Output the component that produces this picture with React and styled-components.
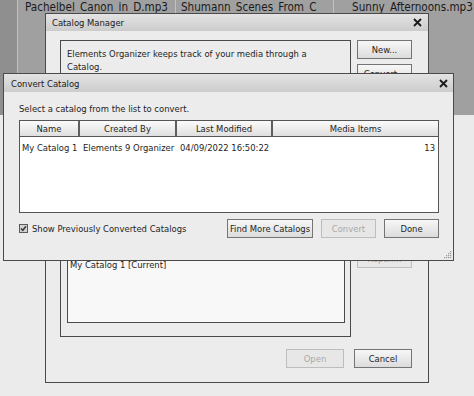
import styled, { createGlobalStyle } from "styled-components";

const UI_FONT = `"DejaVu Sans Condensed", "Liberation Sans", Arial, sans-serif`;

const GlobalStyle = createGlobalStyle`
  html, body {
    margin: 0;
    padding: 0;
  }
  body {
    background: #ebebeb;
    font-family: ${UI_FONT};
    color: #1e1e1e;
  }
`;

const Desktop = styled.div`
  position: relative;
  width: 474px;
  height: 396px;
  overflow: hidden;
  background: #ebebeb;
`;

const MediaRow = styled.div`
  display: flex;
  height: 115px;
  background: #a0a0a0;
`;

const Gutter = styled.div`
  flex: none;
  width: 17px;
  background: #8f8f8f;
`;

const Tile = styled.div`
  flex: none;
  width: 157px;
  border-left: 1px solid #c2c2c2;
`;

const Caption = styled.div`
  padding: 0 5px;
  font-size: 11.6px;
  line-height: 15px;
  white-space: nowrap;
  overflow: hidden;
  text-align: ${(p) => p.$align || "center"};
  color: #1a1a1a;
`;

const Window = styled.div`
  position: absolute;
  left: ${(p) => p.$x}px;
  top: ${(p) => p.$y}px;
  width: ${(p) => p.$w}px;
  height: ${(p) => p.$h}px;
  box-sizing: border-box;
  border: 1px solid #4a4a4a;
  background: #ececec;
  display: flex;
  flex-direction: column;
`;

const TitleBar = styled.div`
  flex: none;
  height: ${(p) => p.$h}px;
  display: flex;
  align-items: center;
  justify-content: space-between;
  padding: 0 ${(p) => p.$pr}px 0 ${(p) => p.$pl}px;
  background: linear-gradient(#e3e3e3, #cccccc);
  font-size: 9.4px;
  color: #1a1a1a;
`;

const Body = styled.div`
  flex: 1;
  display: flex;
  flex-direction: column;
  padding: ${(p) => p.$pad};
  font-size: 9.4px;
  line-height: 13px;
`;

const TopRow = styled.div`
  display: flex;
  gap: 6px;
`;

const GroupBox = styled.div`
  flex: 1;
  height: 297px;
  box-sizing: border-box;
  border: 1px solid #4a4a4a;
  padding: 6px 5px 13px 6px;
  display: flex;
  flex-direction: column;
`;

const ListBox = styled.div`
  margin-top: auto;
  height: 67px;
  box-sizing: border-box;
  border: 1px solid #4a4a4a;
  background: #f8f8f8;
  padding: 1px 2px;
`;

const ButtonColumn = styled.div`
  flex: none;
  width: 55px;
  height: 228px;
  display: flex;
  flex-direction: column;
  gap: 5px;
`;

const Button = styled.button`
  flex: none;
  width: ${(p) => p.$w || 55}px;
  height: 19px;
  box-sizing: border-box;
  margin: 0;
  margin-top: ${(p) => (p.$push ? "auto" : "0")};
  padding: 0;
  border: 1px solid ${(p) => (p.disabled ? "#bdbdbd" : "#747474")};
  border-radius: 0;
  background: ${(p) =>
    p.disabled ? "#e7e7e7" : "linear-gradient(#f7f7f7, #dcdcdc)"};
  color: ${(p) => (p.disabled ? "#a9a9a9" : "#1e1e1e")};
  font-family: ${UI_FONT};
  font-size: 9.4px;
  white-space: nowrap;
`;

const FooterRow = styled.div`
  display: flex;
  justify-content: flex-end;
  gap: 10px;
  margin-top: 12px;
`;

const Prompt = styled.div`
  margin-bottom: 5px;
`;

const Table = styled.div`
  height: 93px;
  box-sizing: border-box;
  border: 1px solid #555;
  background: #fff;
`;

const Grid = styled.div`
  display: grid;
  grid-template-columns: 60px 97px 96px 1fr;
`;

const HeadCell = styled.div`
  height: 16px;
  box-sizing: border-box;
  border-bottom: 1px solid #555;
  border-right: ${(p) => (p.$last ? "none" : "2px solid #5e5e5e")};
  background: linear-gradient(#fbfbfb, #dfdfdf);
  text-align: center;
  line-height: 15px;
`;

const Cell = styled.div`
  padding: 4px 3px 0 ${(p) => (p.$first ? 2 : 3)}px;
  text-align: ${(p) => (p.$right ? "right" : "left")};
  white-space: nowrap;
`;

const BottomBar = styled.div`
  display: flex;
  align-items: center;
  margin-top: 6px;
`;

const CheckLabel = styled.label`
  display: flex;
  align-items: center;
  gap: 4px;
  margin-right: auto;
`;

const Buttons = styled.div`
  display: flex;
  gap: 8px;
`;

const Grip = styled.svg`
  position: absolute;
  right: 1px;
  bottom: 1px;
`;

const CloseIcon = () => (
  <svg width="9" height="9" viewBox="0 0 9 9">
    <path d="M1 1L8 8M8 1L1 8" stroke="#1b1b1b" strokeWidth="1.8" />
  </svg>
);

const CheckBox = () => (
  <svg width="9" height="9" viewBox="0 0 9 9">
    <rect x="0.5" y="0.5" width="8" height="8" fill="#d2d2d2" stroke="#5b5b5b" />
    <path d="M2 4.4L3.8 6.3L7 2.2" stroke="#3a3a3a" strokeWidth="1.5" fill="none" />
  </svg>
);

const files = [
  { name: "Pachelbel_Canon_in_D.mp3" },
  { name: "Shumann_Scenes_From_C", align: "left" },
  { name: "Sunny_Afternoons.mp3" },
];

const rows = [
  ["My Catalog 1", "Elements 9 Organizer", "04/09/2022 16:50:22", "13"],
];

export default function App() {
  return (
    <>
      <GlobalStyle />
      <Desktop>
        <MediaRow>
          <Gutter />
          {files.map((f) => (
            <Tile key={f.name}>
              <Caption $align={f.align}>{f.name}</Caption>
            </Tile>
          ))}
        </MediaRow>

        <Window $x={45} $y={13} $w={384} $h={370}>
          <TitleBar $h={17} $pl={6} $pr={6}>
            <span>Catalog Manager</span>
            <CloseIcon />
          </TitleBar>
          <Body $pad="9px 16px 14px 14px">
            <TopRow>
              <GroupBox>
                <div>
                  Elements Organizer keeps track of your media through a
                  <br />
                  Catalog.
                </div>
                <ListBox>My Catalog 1 [Current]</ListBox>
              </GroupBox>
              <ButtonColumn>
                <Button>New...</Button>
                <Button>Convert...</Button>
                <Button $push disabled>
                  Repair...
                </Button>
              </ButtonColumn>
            </TopRow>
            <FooterRow>
              <Button $w={58} disabled>
                Open
              </Button>
              <Button $w={58}>Cancel</Button>
            </FooterRow>
          </Body>
        </Window>

        <Window $x={3} $y={73} $w={451} $h={188}>
          <TitleBar $h={18} $pl={7} $pr={5}>
            <span>Convert Catalog</span>
            <CloseIcon />
          </TitleBar>
          <Body $pad="10px 14px 22px 15px">
            <Prompt>Select a catalog from the list to convert.</Prompt>
            <Table>
              <Grid>
                <HeadCell>Name</HeadCell>
                <HeadCell>Created By</HeadCell>
                <HeadCell>Last Modified</HeadCell>
                <HeadCell $last>Media Items</HeadCell>
                {rows.map((r) => (
                  <>
                    <Cell $first>{r[0]}</Cell>
                    <Cell>{r[1]}</Cell>
                    <Cell>{r[2]}</Cell>
                    <Cell $right>{r[3]}</Cell>
                  </>
                ))}
              </Grid>
            </Table>
            <BottomBar>
              <CheckLabel>
                <CheckBox />
                Show Previously Converted Catalogs
              </CheckLabel>
              <Buttons>
                <Button $w={86}>Find More Catalogs</Button>
                <Button disabled>Convert</Button>
                <Button>Done</Button>
              </Buttons>
            </BottomBar>
          </Body>
          <Grip width="8" height="8" viewBox="0 0 8 8">
            {[
              [6, 0], [4, 2], [6, 2], [2, 4], [4, 4], [6, 4], [0, 6], [2, 6], [4, 6], [6, 6],
            ].map(([x, y]) => (
              <rect key={`${x}-${y}`} x={x} y={y} width="1.2" height="1.2" fill="#9a9a9a" />
            ))}
          </Grip>
        </Window>
      </Desktop>
    </>
  );
}
